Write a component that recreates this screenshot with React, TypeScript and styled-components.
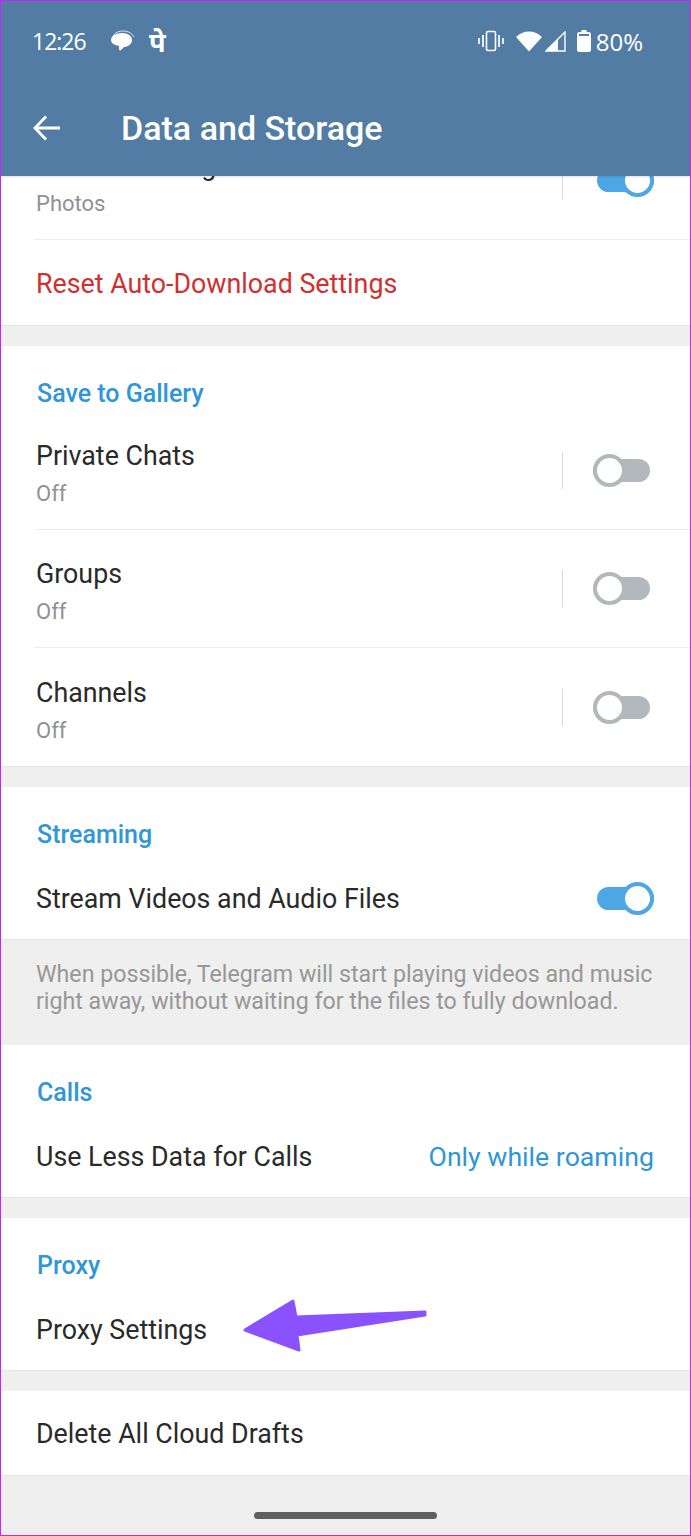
import styled, { createGlobalStyle } from "styled-components";

const GlobalStyle = createGlobalStyle`
  html, body {
    margin: 0;
    padding: 0;
    background: #efefef;
  }
  * {
    box-sizing: border-box;
  }
`;

const Screen = styled.div`
  position: relative;
  width: 691px;
  height: 1536px;
  overflow: hidden;
  background: #efefef;
  border: 1px solid #c626f5;
  font-family: Roboto, "Noto Sans", sans-serif;
  color: #2a2a2a;
`;

const Header = styled.header`
  position: relative;
  z-index: 2;
  height: 175px;
  background: #527ca3;
  color: #ffffff;
  box-shadow: 0 1px 2px rgba(0, 0, 0, 0.12);
`;

const StatusBar = styled.div`
  display: flex;
  align-items: center;
  height: 80px;
  padding: 0 47px 0 31px;
  font-size: 24px;
`;

const Clock = styled.span`
  font-family: "Open Sans", Roboto, sans-serif;
  font-size: 23px;
  letter-spacing: -1px;
  width: 77px;
`;

const PhonePe = styled.span`
  font-size: 27px;
  font-weight: 700;
`;

const StatusRight = styled.div`
  display: flex;
  align-items: center;
  margin-left: auto;
`;

const Percent = styled.span`
  font-family: "Open Sans", Roboto, sans-serif;
  font-size: 24px;
  margin-left: 5px;
`;

const Toolbar = styled.div`
  display: flex;
  align-items: center;
  height: 94px;
  padding-left: 32px;
`;

const PageTitle = styled.h1`
  margin: 0 0 0 60px;
  font-size: 34px;
  font-weight: 500;
`;

const Section = styled.section`
  background: #ffffff;
  border-bottom: 1px solid #e5e5e5;
  margin-bottom: 20px;
`;

const SectionTitle = styled.div<{ $h: number }>`
  height: ${(p) => p.$h}px;
  padding: 33px 0 0 36px;
  font-size: 25px;
  line-height: 30px;
  font-weight: 500;
  color: #2f96d8;
`;

const Row = styled.div<{ $h: number; $divider?: boolean }>`
  display: flex;
  flex: 1;
  align-items: center;
  height: ${(p) => p.$h}px;
  margin-left: 33px;
  padding: 0 36px 0 2px;
  border-bottom: ${(p) => (p.$divider ? "1px solid #ececec" : "none")};
`;

// the list is scrolled, so only the lower part of this row shows under the header
const ClippedRow = styled.div`
  display: flex;
  align-items: flex-end;
  height: 64px;
  overflow: hidden;
`;

const RowText = styled.div`
  flex: 1;
`;

const TwoLineText = styled(RowText)`
  padding-top: 5px;
`;

const Label = styled.div<{ $color?: string }>`
  padding-top: 2px;
  font-size: 26.8px;
  line-height: 30px;
  color: ${(p) => p.$color || "#2a2a2a"};
`;

const Sub = styled.div`
  margin-top: 10px;
  font-size: 22px;
  line-height: 26px;
  color: #919191;
`;

const Value = styled.span`
  padding-top: 2px;
  font-size: 26.7px;
  color: #2f96d8;
`;

const VDivider = styled.div<{ $gap: number }>`
  width: 1px;
  height: 37px;
  background: #dcdcdc;
  margin-right: ${(p) => p.$gap}px;
`;

const Track = styled.div<{ $on?: boolean }>`
  position: relative;
  width: 57px;
  height: 23px;
  border-radius: 12px;
  margin-right: ${(p) => (p.$on ? "0" : "4px")};
  background: ${(p) => (p.$on ? "#4fa6e5" : "#b3b8bd")};
`;

const Knob = styled.div<{ $on?: boolean }>`
  position: absolute;
  top: -5px;
  ${(p) => (p.$on ? "right: 0;" : "left: 0;")}
  width: 33px;
  height: 33px;
  border-radius: 50%;
  background: #ffffff;
  border: 4px solid ${(p) => (p.$on ? "#4fa6e5" : "#b3b8bd")};
`;

const Note = styled.div`
  height: 105px;
  padding: 21px 0 0 35px;
  font-size: 23.2px;
  line-height: 27px;
  color: #979797;
  white-space: nowrap;
`;

const NoteSection = styled(Section)`
  margin-bottom: 0;
`;

const HomeBar = styled.div`
  position: absolute;
  left: 253px;
  bottom: 16px;
  width: 183px;
  height: 7px;
  border-radius: 4px;
  background: #5f5f5f;
`;

const Arrow = styled.svg`
  position: absolute;
  left: 235px;
  top: 1290px;
`;

const Toggle = ({ on }: { on?: boolean }) => (
  <Track $on={on}>
    <Knob $on={on} />
  </Track>
);

const BubbleIcon = () => (
  <svg width="26" height="24" viewBox="0 0 26 24" style={{ marginRight: 14 }}>
    <path d="M4 9c0-4 4-7 10-7 5 0 9 2 11 6" fill="none" stroke="#fff" strokeWidth="1" opacity="0.8" />
    <path d="M13 4c6 0 10 3 10 7s-4 7-8 7l-3 3c-1 1-2 0-2-1v-3c-5-1-8-3-8-6 0-4 5-7 11-7z" fill="#fff" />
  </svg>
);

const VibrateIcon = () => (
  <svg width="26" height="22" viewBox="0 0 26 22" fill="none" stroke="#fff" strokeWidth="1.6" style={{ marginRight: 1 }}>
    <rect x="8.5" y="1.5" width="9" height="19" rx="1.5" />
    <path d="M5 5v12M1 8v6M21 5v12M25 8v6" strokeWidth="2" opacity="0.85" />
  </svg>
);

const WifiIcon = () => (
  <svg width="26" height="21" viewBox="0 0 26 21" style={{ marginLeft: 11 }}>
    <path d="M0 6C3.500 2.500 8 .5 13 .5S22.500 2.500 26 6L13 20.500z" fill="#fff" />
  </svg>
);

const SignalIcon = () => (
  <svg width="21" height="21" viewBox="0 0 21 21" style={{ marginLeft: 3 }}>
    <path d="M20 1v19H1z" fill="none" stroke="#fff" strokeWidth="1.400" />
    <path d="M13 8v12H1.500z" fill="#fff" />
  </svg>
);

const BatteryIcon = () => (
  <svg width="14" height="22" viewBox="0 0 14 22" style={{ marginLeft: 11 }}>
    <path d="M4.500 0h5v2H12c1 0 2 1 2 2v16c0 1-1 2-2 2H2c-1 0-2-1-2-2V4c0-1 1-2 2-2h2.500z" fill="#fff" />
    <rect x="2" y="4" width="10" height="2" fill="#527ca3" />
  </svg>
);

const GalleryRow = ({ label }: { label: string }) => (
  <Row $h={118} $divider={label !== "Channels"}>
    <TwoLineText>
      <Label>{label}</Label>
      <Sub>Off</Sub>
    </TwoLineText>
    <VDivider $gap={30} />
    <Toggle />
  </Row>
);

const App = () => {
  return (
    <Screen>
      <GlobalStyle />
      <Header>
        <StatusBar>
          <Clock>12:26</Clock>
          <BubbleIcon />
          <PhonePe>पे</PhonePe>
          <StatusRight>
            <VibrateIcon />
            <WifiIcon />
            <SignalIcon />
            <BatteryIcon />
            <Percent>80%</Percent>
          </StatusRight>
        </StatusBar>
        <Toolbar>
          <svg width="28" height="26" viewBox="0 0 28 26" fill="none" stroke="#fff" strokeWidth="2.800">
            <path d="M27 13H2M13 1.500L2 13l11 11.500" />
          </svg>
          <PageTitle>Data and Storage</PageTitle>
        </Toolbar>
      </Header>

      <Section>
        <ClippedRow>
          <Row $h={118} $divider>
            <TwoLineText>
              <Label>When Roaming</Label>
              <Sub>Photos</Sub>
            </TwoLineText>
            <VDivider $gap={34} />
            <Toggle on />
          </Row>
        </ClippedRow>
        <Row $h={85}>
          <Label $color="#cf3030">Reset Auto-Download Settings</Label>
        </Row>
      </Section>

      <Section>
        <SectionTitle $h={66}>Save to Gallery</SectionTitle>
        <GalleryRow label="Private Chats" />
        <GalleryRow label="Groups" />
        <GalleryRow label="Channels" />
      </Section>

      <NoteSection>
        <SectionTitle $h={70}>Streaming</SectionTitle>
        <Row $h={82}>
          <RowText>
            <Label>Stream Videos and Audio Files</Label>
          </RowText>
          <Toggle on />
        </Row>
      </NoteSection>
      <Note>
        When possible, Telegram will start playing videos and music
        <br />
        right away, without waiting for the files to fully download.
      </Note>

      <Section>
        <SectionTitle $h={70}>Calls</SectionTitle>
        <Row $h={82}>
          <RowText>
            <Label>Use Less Data for Calls</Label>
          </RowText>
          <Value>Only while roaming</Value>
        </Row>
      </Section>

      <Section>
        <SectionTitle $h={70}>Proxy</SectionTitle>
        <Row $h={82}>
          <Label>Proxy Settings</Label>
        </Row>
      </Section>

      <Section>
        <Row $h={84}>
          <Label>Delete All Cloud Drafts</Label>
        </Row>
      </Section>

      <Arrow width="200" height="70" viewBox="235 1290 200 70">
        <path
          d="M244 1329L292 1300L295 1316L424 1311L424 1314L296 1334L298 1349z"
          fill="#8a52ff"
          stroke="#8a52ff"
          strokeWidth="3"
          strokeLinejoin="round"
        />
      </Arrow>
      <HomeBar />
    </Screen>
  );
};

export default App;
